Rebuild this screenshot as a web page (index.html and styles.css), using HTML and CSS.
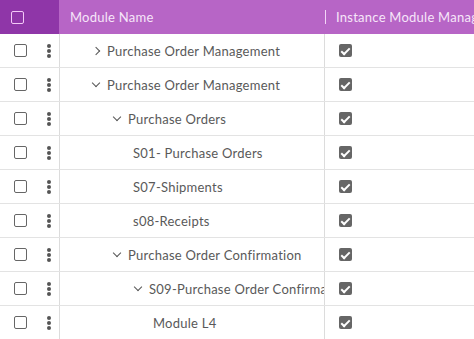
FILE: index.html
```html
<!DOCTYPE html>
<html lang="en">

<head>
    <meta charset="UTF-8">
    <meta name="viewport" content="width=device-width, initial-scale=1.0">
    <title>Module tree</title>
    <link rel="stylesheet" href="styles.css">
</head>

<body>
    <div class="tabela">
        <!-- Cabeçalho -->
        <div class="linha cabecalho">
            <div class="sel"><span class="caixa"></span></div>
            <div class="acoes"></div>
            <div class="nome">Module Name</div>
            <div class="inst"><span class="sep"></span>Instance Module Management</div>
        </div>

        <div class="linha">
            <div class="sel"><span class="caixa"></span></div>
            <div class="acoes"><span class="pontos"></span></div>
            <div class="nome n0"><span class="seta fechada"></span>Purchase Order Management</div>
            <div class="inst"><span class="marcado"></span></div>
        </div>
        <div class="linha">
            <div class="sel"><span class="caixa"></span></div>
            <div class="acoes"><span class="pontos"></span></div>
            <div class="nome n0"><span class="seta"></span>Purchase Order Management</div>
            <div class="inst"><span class="marcado"></span></div>
        </div>
        <div class="linha">
            <div class="sel"><span class="caixa"></span></div>
            <div class="acoes"><span class="pontos"></span></div>
            <div class="nome n1"><span class="seta"></span>Purchase Orders</div>
            <div class="inst"><span class="marcado"></span></div>
        </div>
        <div class="linha">
            <div class="sel"><span class="caixa"></span></div>
            <div class="acoes"><span class="pontos"></span></div>
            <div class="nome folha2">S01- Purchase Orders</div>
            <div class="inst"><span class="marcado"></span></div>
        </div>
        <div class="linha">
            <div class="sel"><span class="caixa"></span></div>
            <div class="acoes"><span class="pontos"></span></div>
            <div class="nome folha2">S07-Shipments</div>
            <div class="inst"><span class="marcado"></span></div>
        </div>
        <div class="linha">
            <div class="sel"><span class="caixa"></span></div>
            <div class="acoes"><span class="pontos"></span></div>
            <div class="nome folha2">s08-Receipts</div>
            <div class="inst"><span class="marcado"></span></div>
        </div>
        <div class="linha">
            <div class="sel"><span class="caixa"></span></div>
            <div class="acoes"><span class="pontos"></span></div>
            <div class="nome n1"><span class="seta"></span>Purchase Order Confirmation</div>
            <div class="inst"><span class="marcado"></span></div>
        </div>
        <div class="linha">
            <div class="sel"><span class="caixa"></span></div>
            <div class="acoes"><span class="pontos"></span></div>
            <div class="nome n2"><span class="seta"></span>S09-Purchase Order Confirmation</div>
            <div class="inst"><span class="marcado"></span></div>
        </div>
        <div class="linha">
            <div class="sel"><span class="caixa"></span></div>
            <div class="acoes"><span class="pontos"></span></div>
            <div class="nome folha3">Module L4</div>
            <div class="inst"><span class="marcado"></span></div>
        </div>
    </div>
</body>

</html>
```

FILE: styles.css
```css
* {
    padding: 0;
    margin: 0;
    box-sizing: border-box;
}

body {
    background: #fff;
    color: #595959;
    font-family: "Lato", "Noto Sans", sans-serif;
    font-size: 13px;
    letter-spacing: 0.25px;
    overflow: hidden;
}

.tabela {
    width: 474px;
}

/* Linhas da tabela */
.linha {
    display: grid;
    grid-template-columns: 38px 21px 266px 1fr;
    height: 34px;
    border-bottom: 1px solid #e3e3e3;
    align-items: center;
}

.linha > div {
    height: 100%;
    display: flex;
    align-items: center;
    white-space: nowrap;
    overflow: hidden;
}

.sel {
    padding-left: 14px;
}

.acoes {
    justify-content: center;
}

.nome {
    border-left: 1px solid #dcdcdc;
    border-right: 1px solid #dcdcdc;
}

.inst {
    padding-left: 14px;
}

/* Cabeçalho */
.cabecalho {
    background-color: #b765c6;
    color: #f6e6f9;
    border-bottom: none;
}

.cabecalho .sel,
.cabecalho .acoes {
    background-color: #8f36a8;
}

.cabecalho .sel {
    padding-left: 11px;
}

.cabecalho .caixa {
    border-color: #f3c9f7;
}

.cabecalho .nome {
    border: none;
    padding-left: 11px;
}

.cabecalho .inst {
    padding-left: 0;
}

.sep {
    width: 2px;
    height: 14px;
    background-color: #f3d6f7;
    margin-left: -1px;
    margin-right: 10px;
    flex-shrink: 0;
}

/* Caixas de seleção */
.caixa {
    width: 13px;
    height: 13px;
    border: 1.5px solid #666;
    border-radius: 2px;
    flex-shrink: 0;
}

.marcado {
    width: 13px;
    height: 13px;
    border-radius: 2px;
    background-color: #666;
    position: relative;
    flex-shrink: 0;
}

.marcado::after {
    content: "";
    position: absolute;
    left: 4px;
    top: 1.5px;
    width: 3px;
    height: 7px;
    border: solid #fff;
    border-width: 0 2px 2px 0;
    transform: rotate(45deg);
}

/* Menu de três pontos */
.pontos {
    width: 4px;
    height: 4px;
    border-radius: 50%;
    background-color: #555;
    box-shadow: 0 -5px 0 #555, 0 5px 0 #555;
}

/* Setas da árvore */
.seta {
    width: 6px;
    height: 6px;
    border: solid #555;
    border-width: 0 1.5px 1.5px 0;
    transform: rotate(45deg);
    margin-right: 8px;
    margin-top: -4px;
    flex-shrink: 0;
}

.seta.fechada {
    transform: rotate(-45deg);
    margin-top: 0;
}

.n0 { padding-left: 33px; }
.n1 { padding-left: 54px; }
.n2 { padding-left: 75px; }
.folha2 { padding-left: 73px; }
.folha3 { padding-left: 93px; }
```
